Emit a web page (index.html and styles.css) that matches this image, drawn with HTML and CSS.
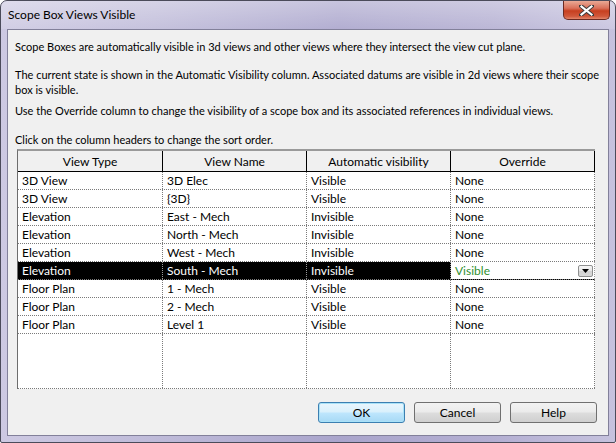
FILE: index.html
```html
<!DOCTYPE html>
<html>
<head>
<meta charset="utf-8">
<link rel="stylesheet" href="styles.css">
</head>
<body>
<div class="window">
  <div class="titlebar">
    <span class="title">Scope Box Views Visible</span>
    <div class="close"><svg width="15" height="11" viewBox="0 0 15 11"><path d="M2 1 L13 10 M13 1 L2 10" stroke="#3a3a3a" stroke-width="4" stroke-linecap="square"/><path d="M2.5 1.5 L12.5 9.5 M12.5 1.5 L2.5 9.5" stroke="#ffffff" stroke-width="2.2" stroke-linecap="square"/></svg></div>
  </div>
  <div class="client">
    <p class="p1">Scope Boxes are automatically visible in 3d views and other views where they intersect the view cut plane.</p>
    <p class="p2">The current state is shown in the Automatic Visibility column. Associated datums are visible in 2d views where their scope<br>box is visible.</p>
    <p class="p3">Use the Override column to change the visibility of a scope box and its associated references in individual views.</p>
    <p class="p4">Click on the column headers to change the sort order.</p>
    <div class="grid">
      <div class="row head">
        <div class="c">View Type</div><div class="c">View Name</div><div class="c">Automatic visibility</div><div class="c">Override</div>
      </div>
      <div class="row"><div class="c">3D View</div><div class="c">3D Elec</div><div class="c">Visible</div><div class="c">None</div></div>
      <div class="row"><div class="c">3D View</div><div class="c">{3D}</div><div class="c">Visible</div><div class="c">None</div></div>
      <div class="row"><div class="c">Elevation</div><div class="c">East - Mech</div><div class="c">Invisible</div><div class="c">None</div></div>
      <div class="row"><div class="c">Elevation</div><div class="c">North - Mech</div><div class="c">Invisible</div><div class="c">None</div></div>
      <div class="row"><div class="c">Elevation</div><div class="c">West - Mech</div><div class="c">Invisible</div><div class="c">None</div></div>
      <div class="row sel"><div class="c">Elevation</div><div class="c">South - Mech</div><div class="c">Invisible</div><div class="c combo"><span class="green">Visible</span><span class="drop"><svg width="7" height="4" viewBox="0 0 7 4"><path d="M0 0 H7 L3.5 4 Z" fill="#000"/></svg></span></div></div>
      <div class="row"><div class="c">Floor Plan</div><div class="c">1 - Mech</div><div class="c">Visible</div><div class="c">None</div></div>
      <div class="row"><div class="c">Floor Plan</div><div class="c">2 - Mech</div><div class="c">Visible</div><div class="c">None</div></div>
      <div class="row"><div class="c">Floor Plan</div><div class="c">Level 1</div><div class="c">Visible</div><div class="c">None</div></div>
      <div class="row filler"><div class="c"></div><div class="c"></div><div class="c"></div><div class="c"></div></div>
    </div>
    <div class="buttons">
      <div class="btn default">OK</div>
      <div class="btn">Cancel</div>
      <div class="btn">Help</div>
    </div>
  </div>
</div>
</body>
</html>
```
FILE: styles.css
```css
html, body {
  margin: 0;
  padding: 0;
  background: #ffffff;
}
body {
  width: 616px;
  height: 443px;
  overflow: hidden;
  font-family: "Lato", "Open Sans", sans-serif;
  font-size: 12px;
  color: #000;
}
.window {
  box-sizing: border-box;
  width: 616px;
  height: 443px;
  border: 1px solid #4b4b5a;
  border-radius: 7px 7px 2px 2px;
  background: linear-gradient(90deg, #cdc9e2 0%, #bfbbd9 25%, #aaa5cc 55%, #b4afd2 80%, #c6c2de 100%);
  display: flex;
  flex-direction: column;
}
.titlebar {
  height: 28px;
  flex: none;
  display: flex;
  align-items: flex-start;
  justify-content: space-between;
  background: linear-gradient(180deg, rgba(255,255,255,0.35) 0%, rgba(255,255,255,0.1) 100%);
  border-radius: 6px 6px 0 0;
}
.title {
  margin: 6px 0 0 7px;
  line-height: 16px;
  color: #000;
}
.close {
  width: 47px;
  height: 19px;
  margin-right: 5px;
  box-sizing: border-box;
  border: 1px solid #6b2a22;
  border-top: none;
  border-radius: 0 0 5px 5px;
  background: linear-gradient(180deg, #eaa995 0%, #d9705a 40%, #c73f20 55%, #d0583b 85%, #e3876c 100%);
  display: flex;
  align-items: center;
  justify-content: center;
}
.client {
  flex: 1;
  margin: 0 6px 6px 6px;
  border: 1px solid #82809a;
  background: #f0f0f0;
  display: flex;
  flex-direction: column;
}
.client p {
  margin: 0;
  padding-left: 7px;
  font-size: 11px;
  line-height: 15px;
  white-space: nowrap;
}
.p1 { margin-top: 9px !important; }
.p2 { margin-top: 13px !important; }
.p3 { margin-top: 6px !important; }
.p4 { margin-top: 14px !important; }
.grid {
  margin: 2px 0 0 9px;
  width: 578px;
  box-sizing: border-box;
  border-top: 2px solid #9a9a9a;
  border-left: 1px solid #6d6d6d;
  background: #ffffff;
  display: flex;
  flex-direction: column;
}
.row {
  display: grid;
  grid-template-columns: 145px 144px 144px 144px;
  height: 18px;
  box-sizing: border-box;
  border-bottom: 1px dotted #7a7a7a;
}
.row .c {
  box-sizing: border-box;
  border-right: 1px dotted #7a7a7a;
  padding-left: 4px;
  line-height: 18px;
  white-space: nowrap;
  overflow: hidden;
}
.row.head {
  height: 21px;
  background: #f0f0f0;
  border-bottom: 1px solid #000;
}
.row.head .c {
  border-right: 1px solid #000;
  text-align: center;
  padding-left: 0;
  line-height: 21px;
}
.row.sel {
  background: #000;
  color: #fff;
}
.row.sel .c {
  border-right-color: #9a9a9a;
}
.row.sel .combo {
  background: #fff;
  display: flex;
  align-items: center;
  justify-content: space-between;
  padding-right: 1px;
}
.green { color: #2f8f2f; }
.drop {
  width: 15px;
  height: 12px;
  box-sizing: border-box;
  border: 1px solid #8e8f8f;
  border-radius: 2px;
  background: linear-gradient(180deg, #f7f7f7 0%, #e6e6e6 50%, #d3d3d3 51%, #dadada 100%);
  display: flex;
  align-items: center;
  justify-content: center;
}
.row.filler {
  height: 55px;
}
.buttons {
  display: flex;
  justify-content: flex-end;
  gap: 9px;
  margin: 13px 11px 0 0;
}
.btn {
  width: 87px;
  height: 21px;
  box-sizing: border-box;
  border: 1px solid #707070;
  border-radius: 3px;
  background: linear-gradient(180deg, #f2f2f2 0%, #ebebeb 48%, #dddddd 52%, #cfcfcf 100%);
  text-align: center;
  line-height: 19px;
}
.btn.default {
  border-color: #3c7fb1;
  box-shadow: inset 0 0 0 1px #a9e2f8;
  background: linear-gradient(180deg, #eaf6fd 0%, #d9f0fc 48%, #bee6fd 52%, #a7d9f5 100%);
}
```
